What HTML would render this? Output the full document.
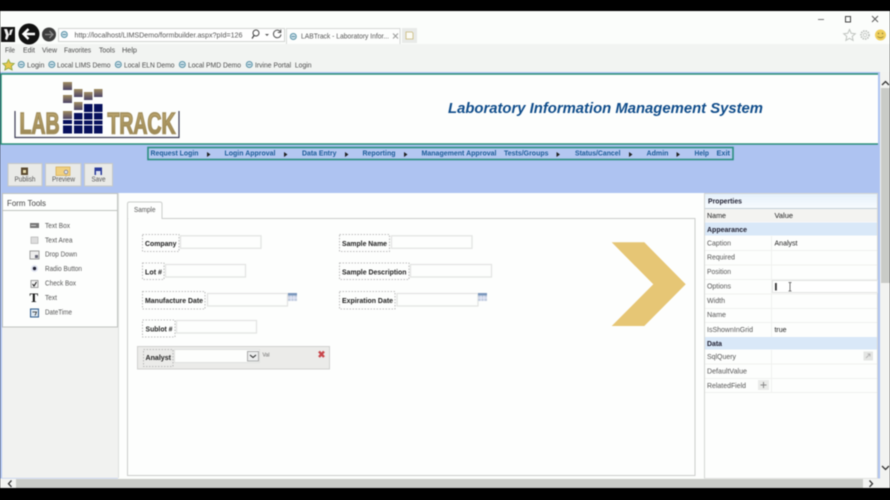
<!DOCTYPE html>
<html lang="en"><head><meta charset="utf-8"><title>LABTrack - Laboratory Information Management System</title>
<style>
html,body{margin:0;padding:0;width:890px;height:500px;overflow:hidden;background:#000}
svg{display:block;filter:blur(.42px)}
text{font-family:"Liberation Sans",sans-serif;font-size:7.5px;fill:#555}
.c{fill:#4a4a4a}
.m{font-weight:bold;fill:#1c5c98;font-size:7.5px}
.l{font-weight:bold;fill:#222;font-size:7.5px}
.d{fill:none;stroke:#aaa;stroke-width:.8;stroke-dasharray:1.5 1.5}
.i{fill:#fdfefd;stroke:#e2e3e1;stroke-width:1.2}
.p{fill:#555}
.h{font-weight:bold;fill:#223}
.a{fill:#222}
.li{stroke:#f0f1ef;stroke-width:1}
.logo{font-size:30px;font-weight:bold;fill:url(#gold);stroke:#a08d5c;stroke-width:1.5}
</style></head><body>
<svg width="890" height="500" viewBox="0 0 890 500" xmlns="http://www.w3.org/2000/svg">
<defs>
<linearGradient id="sq" x1="0" y1="0" x2="0" y2="1"><stop offset="0" stop-color="#a08c60"/><stop offset="1" stop-color="#4a4368"/></linearGradient>
<linearGradient id="gold" x1="0" y1="0" x2="0" y2="1"><stop offset="0" stop-color="#c2ab72"/><stop offset="1" stop-color="#94804f"/></linearGradient>
<linearGradient id="ph" x1="0" y1="0" x2="0" y2="1"><stop offset="0" stop-color="#e6f1fb"/><stop offset="1" stop-color="#f7fbfe"/></linearGradient>
<g id="ie"><circle cx="3.300" cy="3.500" r="3" fill="#cfe2ea" stroke="#5b93a8" stroke-width="1"/><path d="M1.500 3.600h3.600" stroke="#3f7d96" stroke-width=".8"/></g>
<g id="cal"><rect width="9" height="8" fill="#c4cedf"/><rect width="9" height="2.500" fill="#7b97bc"/><path d="M3 2.500v5.500M6 2.500v5.500M0 5h9" stroke="#eef" stroke-width=".7"/></g>
</defs>

<rect width="890" height="500" fill="#000"/>
<rect y="11" width="890" height="33" fill="#fbfdfb"/>
<rect y="44" width="890" height="28" fill="#f2f4f2"/>
<rect y="72" width="890" height="416" fill="#aec3f1"/>

<!-- Browser chrome -->
<rect x="1" y="27" width="14" height="15" fill="#111"/>
<path d="M4 29l3 0 2 6-2 5-2-1 1-4zM10 30l3-1-2 6-2 0z" fill="#f2f2f2"/>
<circle cx="29" cy="34" r="10.500" fill="#111"/>
<path d="M35 34H24M28.500 29l-5 5 5 5" fill="none" stroke="#fff" stroke-width="2.400"/>
<circle cx="49" cy="34.500" r="7" fill="#3c3c3c"/>
<path d="M45 34.500h7.500M49.500 31l3.500 3.500-3.500 3.500" fill="none" stroke="#8a8a8a" stroke-width="1.300"/>
<rect x="58.500" y="28.500" width="226" height="13" fill="#fff" stroke="#d2d4d2"/>
<use href="#ie" x="61" y="31"/>
<text x="74.500" y="37.500" textLength="168" lengthAdjust="spacingAndGlyphs" class="p">http://localhost/LIMSDemo/formbuilder.aspx?pId=126</text>
<circle cx="256" cy="33" r="3" fill="none" stroke="#444" stroke-width="1"/><path d="M254 35.500l-2 3" stroke="#444" stroke-width="1.200"/>
<path d="M265 34h4l-2 2z" fill="#555"/>
<path d="M280.500 32a3.800 3.800 0 1 0 .5 2.500M280.800 29.500v3h-3" fill="none" stroke="#555" stroke-width="1"/>
<path d="M286.500 44V28.500H400V44" fill="#fdfefd" stroke="#d6d8d6"/>
<use href="#ie" x="290" y="33"/>
<text x="301" y="38.500" textLength="88" lengthAdjust="spacingAndGlyphs" class="p">LABTrack - Laboratory Infor...</text>
<path d="M393 33.500l5 5M398 33.500l-5 5" stroke="#999" stroke-width="1"/>
<rect x="402" y="28" width="15" height="15" fill="#e8eae8"/>
<path d="M406 32h6l1 1v6h-7z" fill="#fbfbf4" stroke="#c9b877" stroke-width=".8"/>
<path d="M818 19.500h6" stroke="#777"/>
<rect x="845.500" y="16.500" width="5" height="5.500" fill="none" stroke="#444" stroke-width="1"/>
<path d="M872 16l6 6M878 16l-6 6" stroke="#555" stroke-width=".9"/>
<path d="M849.500 29.500l1.700 3.800 4.100.4-3.100 2.700.9 4-3.600-2.100-3.600 2.100.9-4-3.100-2.700 4.100-.4z" fill="none" stroke="#c0c4c0"/>
<circle cx="865" cy="35" r="4" fill="none" stroke="#c0c4c0" stroke-width="1.800" stroke-dasharray="1.500 .9"/><circle cx="865" cy="35" r="1.700" fill="none" stroke="#c0c4c0" stroke-width=".8"/>
<circle cx="880.500" cy="35" r="5.500" fill="#efcf5c"/><circle cx="878.500" cy="33.500" r=".7" fill="#8a7a30"/><circle cx="882.500" cy="33.500" r=".7" fill="#8a7a30"/><path d="M877.500 36.500q3 2.500 6 0" fill="none" stroke="#8a7a30" stroke-width=".7"/>

<text class="c" x="5" y="52.500" textLength="10" lengthAdjust="spacingAndGlyphs">File</text>
<text class="c" x="23" y="52.500" textLength="12" lengthAdjust="spacingAndGlyphs">Edit</text>
<text class="c" x="42" y="52.500" textLength="15" lengthAdjust="spacingAndGlyphs">View</text>
<text class="c" x="64" y="52.500" textLength="27" lengthAdjust="spacingAndGlyphs">Favorites</text>
<text class="c" x="99" y="52.500" textLength="16" lengthAdjust="spacingAndGlyphs">Tools</text>
<text class="c" x="122" y="52.500" textLength="15" lengthAdjust="spacingAndGlyphs">Help</text>

<path d="M8.500 59.500l1.800 3.500 4 .5-2.900 2.700.8 3.800-3.700-1.900-3.700 1.900.8-3.800-2.900-2.700 4-.5z" fill="#e7c94e" stroke="#89a33f" stroke-width=".8"/>
<use href="#ie" x="18" y="61"/><text class="c" x="27" y="67.500" textLength="17.500" lengthAdjust="spacingAndGlyphs">Login</text>
<use href="#ie" x="48.500" y="61"/><text class="c" x="57" y="67.500" textLength="53.500" lengthAdjust="spacingAndGlyphs">Local LIMS Demo</text>
<use href="#ie" x="115" y="61"/><text class="c" x="124" y="67.500" textLength="50.500" lengthAdjust="spacingAndGlyphs">Local ELN Demo</text>
<use href="#ie" x="179" y="61"/><text class="c" x="188" y="67.500" textLength="53" lengthAdjust="spacingAndGlyphs">Local PMD Demo</text>
<use href="#ie" x="246" y="61"/><text class="c" x="255" y="67.500" xml:space="preserve" textLength="56.500" lengthAdjust="spacingAndGlyphs">Irvine Portal  Login</text>

<!-- Header -->
<rect x="1" y="74" width="879" height="70" fill="#fdfefd" stroke="#1f8a72" stroke-width="1.400"/>
<path d="M15 111v26.500h164V111" fill="none" stroke="#3d3d55" stroke-width="1.200"/>
<g fill="url(#sq)">
<rect x="63" y="82" width="9" height="8"/><rect x="63" y="95" width="9" height="8"/><rect x="63" y="111" width="9" height="8"/>
<rect x="74" y="89" width="8.500" height="8"/><rect x="74" y="102" width="8.500" height="8"/>
<rect x="84" y="92" width="8.500" height="8"/><rect x="94" y="89" width="8.500" height="8"/>
</g>
<g fill="#07105c">
<rect x="63" y="120" width="9" height="4"/><rect x="63" y="125.500" width="9" height="8"/>
<rect x="74" y="113" width="8.500" height="6.500"/><rect x="74" y="120.500" width="8.500" height="4"/><rect x="74" y="125.500" width="8.500" height="8"/>
<rect x="84" y="104" width="8.500" height="8"/><rect x="84" y="113" width="8.500" height="6.500"/><rect x="84" y="120.500" width="8.500" height="4"/><rect x="84" y="125.500" width="8.500" height="8"/>
<rect x="94" y="104" width="8.500" height="8"/><rect x="94" y="113" width="8.500" height="6.500"/><rect x="94" y="120.500" width="8.500" height="4"/><rect x="94" y="125.500" width="8.500" height="8"/>
</g>
<text class="logo" x="19.500" y="133.500" textLength="40" lengthAdjust="spacingAndGlyphs">LAB</text>
<text class="logo" x="107.500" y="133.500" textLength="68" lengthAdjust="spacingAndGlyphs">TRACK</text>
<text x="448" y="113" textLength="315" lengthAdjust="spacingAndGlyphs" style="font-size:14.500px;font-weight:bold;font-style:italic;fill:#0f4c8a">Laboratory Information Management System</text>

<!-- Menu -->
<rect x="148" y="147.500" width="585" height="12" fill="#b4c7f1" stroke="#2a8f80" stroke-width="1.600"/>
<text class="m" x="150.500" y="155.500" textLength="48" lengthAdjust="spacingAndGlyphs">Request Login</text>
<text class="m" x="224.500" y="155.500" textLength="51" lengthAdjust="spacingAndGlyphs">Login Approval</text>
<text class="m" x="302" y="155.500" textLength="34.500" lengthAdjust="spacingAndGlyphs">Data Entry</text>
<text class="m" x="362.500" y="155.500" textLength="33" lengthAdjust="spacingAndGlyphs">Reporting</text>
<text class="m" x="421.500" y="155.500" textLength="75" lengthAdjust="spacingAndGlyphs">Management Approval</text>
<text class="m" x="504" y="155.500" textLength="44.500" lengthAdjust="spacingAndGlyphs">Tests/Groups</text>
<text class="m" x="575" y="155.500" textLength="45.500" lengthAdjust="spacingAndGlyphs">Status/Cancel</text>
<text class="m" x="646.500" y="155.500" textLength="22" lengthAdjust="spacingAndGlyphs">Admin</text>
<text class="m" x="694.500" y="155.500" textLength="14.500" lengthAdjust="spacingAndGlyphs">Help</text>
<text class="m" x="716.500" y="155.500" textLength="13.500" lengthAdjust="spacingAndGlyphs">Exit</text>
<g fill="#222">
<path d="M207 152l3.500 2.500-3.500 2.500z"/><path d="M284 152l3.500 2.500-3.500 2.500z"/><path d="M345 152l3.500 2.500-3.500 2.500z"/><path d="M404 152l3.500 2.500-3.500 2.500z"/><path d="M556.500 152l3.500 2.500-3.500 2.500z"/><path d="M629 152l3.500 2.500-3.500 2.500z"/><path d="M676.500 152l3.500 2.500-3.500 2.500z"/>
</g>

<!-- Toolbar -->
<rect x="8" y="163.500" width="34" height="22.500" fill="#e9eae7" stroke="#c6c9c6"/>
<rect x="45.500" y="163.500" width="35.500" height="22.500" fill="#e9eae7" stroke="#c6c9c6"/>
<rect x="84.500" y="163.500" width="28" height="22.500" fill="#e9eae7" stroke="#c6c9c6"/>
<rect x="21" y="167.500" width="7" height="7.500" fill="#5b4a30"/><path d="M23 170h3v3h-3z" fill="#e8dcb0"/>
<rect x="56" y="167" width="14" height="8.500" fill="#f0d080" stroke="#d5a84a" stroke-width=".7"/><circle cx="66" cy="172" r="1.800" fill="#dfe6ee" stroke="#668" stroke-width=".6"/>
<rect x="94.500" y="167.500" width="7.500" height="7.500" fill="#2b3c9a"/><rect x="96" y="171" width="4.500" height="4" fill="#dfe3ef"/>
<text x="14.500" y="181.500" textLength="21" lengthAdjust="spacingAndGlyphs" class="p">Publish</text>
<text x="52" y="181.500" textLength="23" lengthAdjust="spacingAndGlyphs" class="p">Preview</text>
<text x="91.500" y="181.500" textLength="14" lengthAdjust="spacingAndGlyphs" class="p">Save</text>

<!-- Left column -->
<rect x="2" y="193" width="116" height="285" fill="#f1f2f0"/>
<rect x="2.500" y="193.500" width="115" height="133.500" fill="#fdfefd" stroke="#c0c3c0"/>
<path d="M3 210.500h114" stroke="#c0c3c0"/>
<text x="7" y="206" textLength="39" lengthAdjust="spacingAndGlyphs" style="font-size:8px;fill:#444">Form Tools</text>
<rect x="30" y="223" width="9" height="5" fill="#777"/><path d="M31 225.500h5" stroke="#ccc"/>
<rect x="31" y="237" width="7" height="6.500" fill="#ddd" stroke="#aaa" stroke-width=".6"/>
<rect x="30" y="251" width="9" height="8" fill="#eee" stroke="#888" stroke-width=".8"/><rect x="35" y="255" width="3" height="3" fill="#667"/>
<circle cx="34.500" cy="268.500" r="3.500" fill="#dfe3f0"/><circle cx="34.500" cy="268.500" r="1.700" fill="#223"/>
<rect x="31" y="280.500" width="7" height="7" fill="#f3f3f3" stroke="#888" stroke-width=".8"/><path d="M32.500 284l1.500 2 2.500-4" fill="none" stroke="#111" stroke-width="1"/>
<text x="29.500" y="302" style="font-family:'Liberation Serif',serif;font-size:13px;font-weight:bold;fill:#111">T</text>
<rect x="30.500" y="309" width="8" height="8" fill="#dfeaf3" stroke="#2c5a8c" stroke-width="1"/><path d="M32.500 312h4l-1.500 3.500" fill="none" stroke="#222" stroke-width=".8"/>
<text x="45" y="228" textLength="25" lengthAdjust="spacingAndGlyphs" class="p">Text Box</text>
<text x="45" y="242.500" textLength="27.500" lengthAdjust="spacingAndGlyphs" class="p">Text Area</text>
<text x="45" y="256.500" textLength="32" lengthAdjust="spacingAndGlyphs" class="p">Drop Down</text>
<text x="45" y="271" textLength="37" lengthAdjust="spacingAndGlyphs" class="p">Radio Button</text>
<text x="45" y="285.500" textLength="31" lengthAdjust="spacingAndGlyphs" class="p">Check Box</text>
<text x="45" y="300" textLength="12" lengthAdjust="spacingAndGlyphs" class="p">Text</text>
<text x="45" y="314.500" textLength="27" lengthAdjust="spacingAndGlyphs" class="p">DateTime</text>

<!-- Main -->
<rect x="118" y="193" width="586" height="285.500" fill="#fdfefd"/>
<path d="M118.500 193v285" stroke="#dfe1df"/>
<rect x="127.500" y="218.500" width="567.500" height="257" fill="#fdfefd" stroke="#cbcdcb"/>
<path d="M127.500 218.500V204q0-2 2-2H160q2 0 2 2v14.500" fill="#fdfefd" stroke="#cbcdcb"/>
<path d="M128.500 218.500h33" stroke="#fdfefd" stroke-width="1.500"/>
<text x="134" y="212" textLength="21.500" lengthAdjust="spacingAndGlyphs" class="p">Sample</text>

<rect class="d" x="142.500" y="234.500" width="36.500" height="17"/>
<text class="l" x="145" y="246" textLength="31.500" lengthAdjust="spacingAndGlyphs">Company</text>
<rect class="i" x="180.500" y="235.800" width="80.500" height="12.500"/>
<rect class="d" x="142.500" y="263" width="21.500" height="16.500"/>
<text class="l" x="145" y="274.500" textLength="17" lengthAdjust="spacingAndGlyphs">Lot #</text>
<rect class="i" x="165.500" y="264.500" width="80" height="12.500"/>
<rect class="d" x="142.500" y="291.500" width="62.500" height="17.500"/>
<text class="l" x="145" y="303" textLength="58" lengthAdjust="spacingAndGlyphs">Manufacture Date</text>
<rect class="i" x="207.500" y="293.500" width="80" height="12.500"/>
<use href="#cal" x="288" y="293"/>
<rect class="d" x="142.500" y="320" width="32.500" height="17"/>
<text class="l" x="145.500" y="331.500" textLength="27" lengthAdjust="spacingAndGlyphs">Sublot #</text>
<rect class="i" x="176.500" y="320.500" width="80" height="12.500"/>

<rect class="d" x="339.500" y="234.500" width="50" height="17"/>
<text class="l" x="342" y="246" textLength="45" lengthAdjust="spacingAndGlyphs">Sample Name</text>
<rect class="i" x="391.500" y="235.800" width="80.500" height="12.500"/>
<rect class="d" x="339.500" y="263" width="69.500" height="16.500"/>
<text class="l" x="342" y="274.500" textLength="64.500" lengthAdjust="spacingAndGlyphs">Sample Description</text>
<rect class="i" x="410.500" y="264.500" width="81" height="12.500"/>
<rect class="d" x="339.500" y="291.500" width="55.500" height="17.500"/>
<text class="l" x="342" y="303" textLength="51" lengthAdjust="spacingAndGlyphs">Expiration Date</text>
<rect class="i" x="397" y="293.500" width="81" height="12.500"/>
<use href="#cal" x="478" y="293"/>

<rect x="137.500" y="346.500" width="192" height="22.500" fill="#ebebe9" stroke="#d0d1cf"/>
<rect class="d" x="143.500" y="349.500" width="29.500" height="17"/>
<text class="l" x="145.500" y="360" textLength="25.500" lengthAdjust="spacingAndGlyphs">Analyst</text>
<rect x="174.500" y="349.500" width="85" height="13" fill="#fdfefd" stroke="#e0e1df"/>
<rect x="247.500" y="351.500" width="11" height="9.500" fill="#eceded" stroke="#999" stroke-width=".8"/>
<path d="M250 355l3 2.500 3-2.500" fill="none" stroke="#222" stroke-width="1"/>
<text x="262.500" y="356.500" textLength="7" lengthAdjust="spacingAndGlyphs" style="font-size:5px;fill:#666">Val</text>
<path d="M319 351.500l5 5.500M324 351.500l-5 5.500" stroke="#c8454a" stroke-width="2.400"/>

<path d="M611.700 242.300H644.300L685.700 284.300L644.300 326H611.700L653.300 284.300Z" fill="#e6c675"/>

<!-- Properties -->
<rect x="704.500" y="193.500" width="173" height="285" fill="#fdfefd" stroke="#d4d6d4"/>
<rect x="705" y="194" width="172" height="14" fill="url(#ph)"/>
<path d="M705 208.500h172" stroke="#c4cfd8"/>
<rect x="705" y="209" width="172" height="13" fill="#f3f3f1"/>
<rect x="705" y="222.500" width="172" height="13" fill="#d9e8f8"/>
<rect x="705" y="337" width="172" height="12.500" fill="#d9e8f8"/>
<path class="li" d="M705 250.500h172M705 265h172M705 279.500h172M705 294h172M705 308.500h172M705 322.500h172M705 364h172M705 378.500h172M705 392.500h172"/>
<path d="M771.500 236v101M771.500 350v42" stroke="#f0f1ef"/>
<text class="h" x="708" y="203.500" textLength="34" lengthAdjust="spacingAndGlyphs">Properties</text>
<text class="a" x="707" y="218" textLength="19" lengthAdjust="spacingAndGlyphs">Name</text>
<text class="a" x="774.500" y="218" textLength="18.500" lengthAdjust="spacingAndGlyphs">Value</text>
<text class="h" x="707" y="232" textLength="40" lengthAdjust="spacingAndGlyphs">Appearance</text>
<text class="p" x="707" y="245.500" textLength="24" lengthAdjust="spacingAndGlyphs">Caption</text>
<text class="a" x="774.500" y="245.500" textLength="23" lengthAdjust="spacingAndGlyphs">Analyst</text>
<text class="p" x="707" y="259.500" textLength="28" lengthAdjust="spacingAndGlyphs">Required</text>
<text class="p" x="707" y="274" textLength="24" lengthAdjust="spacingAndGlyphs">Position</text>
<text class="p" x="707" y="288.500" textLength="24" lengthAdjust="spacingAndGlyphs">Options</text>
<text class="p" x="707" y="303" textLength="18" lengthAdjust="spacingAndGlyphs">Width</text>
<text class="p" x="707" y="317" textLength="19" lengthAdjust="spacingAndGlyphs">Name</text>
<text class="p" x="707" y="332" textLength="46" lengthAdjust="spacingAndGlyphs">IsShownInGrid</text>
<text class="a" x="774.500" y="332" textLength="12" lengthAdjust="spacingAndGlyphs">true</text>
<text class="h" x="707" y="346" textLength="15" lengthAdjust="spacingAndGlyphs">Data</text>
<text class="p" x="707" y="359" textLength="29" lengthAdjust="spacingAndGlyphs">SqlQuery</text>
<text class="p" x="707" y="373.500" textLength="40" lengthAdjust="spacingAndGlyphs">DefaultValue</text>
<text class="p" x="707" y="388" textLength="39" lengthAdjust="spacingAndGlyphs">RelatedField</text>
<rect x="772.500" y="280.500" width="105" height="12" fill="#fff" stroke="#e2e4e2"/>
<rect x="775" y="283" width="1.800" height="7.500" fill="#333"/>
<path d="M788.500 282.500h3M790 282.500v8.500M788.500 291h3" fill="none" stroke="#555" stroke-width=".8"/>
<rect x="863.500" y="351.500" width="9.500" height="9" fill="#e4e5e3"/><path d="M866 358l4-4M867.500 354h2.500v2.500" fill="none" stroke="#aaa" stroke-width=".8"/>
<rect x="758" y="380" width="11" height="10" fill="#eaebe9"/><path d="M763.500 382v6M760.500 385h6" stroke="#888" stroke-width="1"/>

<!-- Scrollbars -->
<rect x="878" y="72" width="2" height="407" fill="#aec3f1"/>
<rect x="880" y="72" width="10" height="416" fill="#f2f3f1"/>
<rect x="881" y="88" width="9" height="195" fill="#c9cbc7"/>
<path d="M882 85l3.500-3.500 3.500 3.500" fill="none" stroke="#333" stroke-width="1.300"/>
<path d="M882 466l3.500 3.500 3.500-3.500" fill="none" stroke="#333" stroke-width="1.300"/>
<rect x="0" y="478.500" width="890" height="9.500" fill="#f2f3f1"/>
<rect x="16" y="479" width="847" height="9" fill="#c9cbc7"/>
<path d="M11.500 480.500l-3 3.200 3 3.200" fill="none" stroke="#333" stroke-width="1.300"/>
<path d="M869.500 480.500l3 3.200-3 3.200" fill="none" stroke="#333" stroke-width="1.300"/>
<rect x="0" y="488" width="890" height="12" fill="#000"/>
</svg>
</body></html>
